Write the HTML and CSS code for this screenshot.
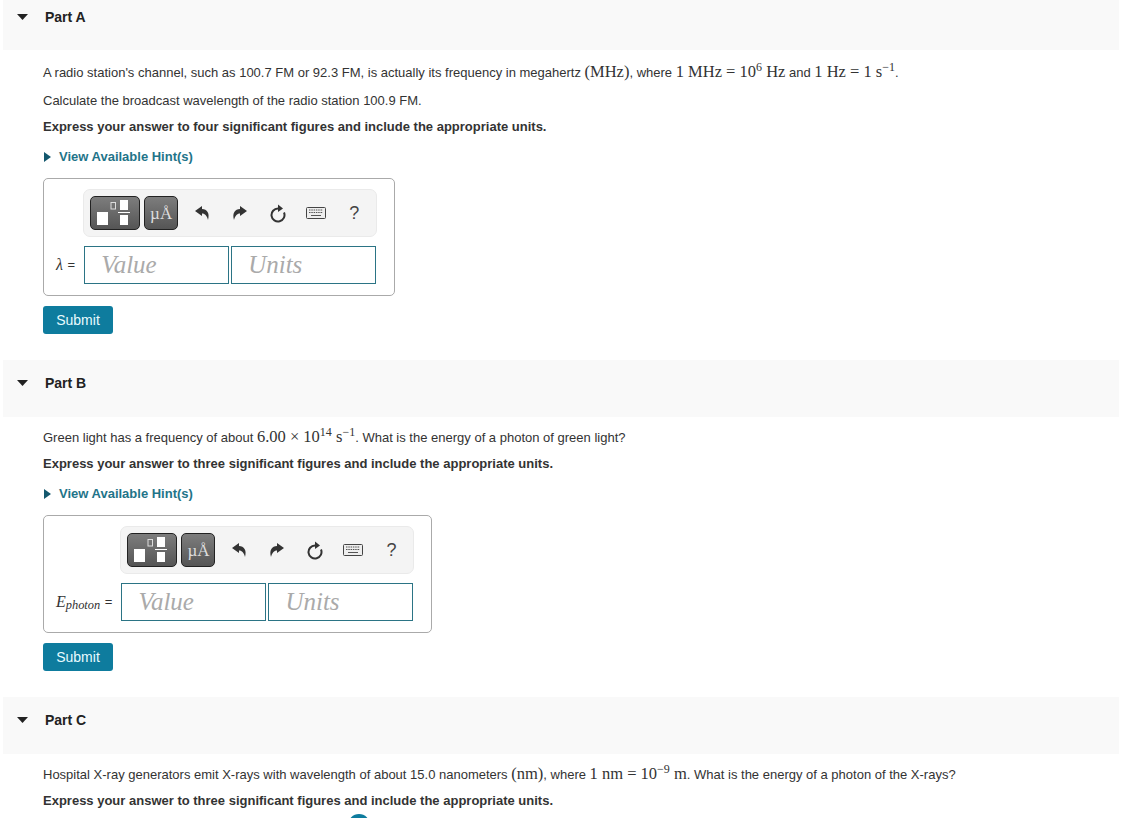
FILE: index.html
```html
<!DOCTYPE html>
<html>

<head>
    <title>Part A, B, C</title>
    <link rel="stylesheet" href="styles.css">
</head>

<body>
    <div class="container">

        <section class="part">
            <header class="part-header part-header-first">
                <svg class="caret" width="11" height="6" viewBox="0 0 11 6"><path d="M0 0H11L5.5 6Z" /></svg>
                <span>Part A</span>
            </header>
            <div class="part-body">
                <p class="text intro">A radio station's channel, such as 100.7 FM or 92.3 FM, is actually its frequency in megahertz <span class="math">(MHz)</span>, where <span class="math">1 MHz = 10<sup>6</sup> Hz</span> and <span class="math">1 Hz = 1 s<sup>&minus;1</sup></span>.</p>
                <p class="text">Calculate the broadcast wavelength of the radio station 100.9 FM.</p>
                <p class="text"><strong>Express your answer to four significant figures and include the appropriate units.</strong></p>
                <a class="hint">
                    <svg width="7" height="10" viewBox="0 0 7 10"><path d="M0 0L7 5L0 10Z" /></svg>
                    View Available Hint(s)
                </a>
                <div class="answer-box">
                    <div class="toolbar">
                        <div class="tool-btn tool-btn-wide">
                            <svg width="50" height="34" viewBox="0 0 50 34"><rect x="7" y="16" width="11" height="13" fill="#fff" /><rect x="21" y="6.5" width="4.5" height="6.5" fill="none" stroke="#ddd" /><rect x="30" y="4" width="8" height="10" fill="#fff" /><rect x="28" y="16" width="12" height="1" fill="#fff" /><rect x="30" y="19" width="8" height="10" fill="#fff" /></svg>
                        </div>
                        <div class="tool-btn">&micro;&Aring;</div>
                        <div class="tool-icons">
                            <svg width="16" height="16" viewBox="0 0 16 16"><path d="M1 6L8 1V4C13 4 16 8 14 15C13 11 11 8.500 8 8.500V11Z" /></svg>
                            <svg width="16" height="16" viewBox="0 0 16 16"><path d="M15 6L8 1V4C3 4 0 8 2 15C3 11 5 8.500 8 8.500V11Z" /></svg>
                            <svg width="18" height="20" viewBox="0 0 18 20"><path d="M9 5.500A6.500 6.500 0 1 0 15 9.500" fill="none" stroke="#333" stroke-width="2" /><path d="M9 1.500L14 5.500L9 9Z" /></svg>
                            <svg width="20" height="12" viewBox="0 0 20 12"><rect x="0.500" y="0.500" width="19" height="11" rx="1" fill="#eee" stroke="#444" /><path d="M3 3H17M3 5.500H17" stroke="#555" stroke-dasharray="1.500 .8" /><path d="M5 8.500H15" stroke="#555" /></svg>
                            <span class="tool-help">?</span>
                        </div>
                    </div>
                    <div class="answer-label"><i class="math">&lambda;</i> =</div>
                    <div class="fields">
                        <div class="field">Value</div>
                        <div class="field">Units</div>
                    </div>
                </div>
                <button class="submit">Submit</button>
            </div>
        </section>

        <section class="part">
            <header class="part-header">
                <svg class="caret" width="11" height="6" viewBox="0 0 11 6"><path d="M0 0H11L5.5 6Z" /></svg>
                <span>Part B</span>
            </header>
            <div class="part-body">
                <p class="text">Green light has a frequency of about <span class="math">6.00 &times; 10<sup>14</sup> s<sup>&minus;1</sup></span>. What is the energy of a photon of green light?</p>
                <p class="text"><strong>Express your answer to three significant figures and include the appropriate units.</strong></p>
                <a class="hint">
                    <svg width="7" height="10" viewBox="0 0 7 10"><path d="M0 0L7 5L0 10Z" /></svg>
                    View Available Hint(s)
                </a>
                <div class="answer-box">
                    <div class="toolbar">
                        <div class="tool-btn tool-btn-wide">
                            <svg width="50" height="34" viewBox="0 0 50 34"><rect x="7" y="16" width="11" height="13" fill="#fff" /><rect x="21" y="6.5" width="4.5" height="6.5" fill="none" stroke="#ddd" /><rect x="30" y="4" width="8" height="10" fill="#fff" /><rect x="28" y="16" width="12" height="1" fill="#fff" /><rect x="30" y="19" width="8" height="10" fill="#fff" /></svg>
                        </div>
                        <div class="tool-btn">&micro;&Aring;</div>
                        <div class="tool-icons">
                            <svg width="16" height="16" viewBox="0 0 16 16"><path d="M1 6L8 1V4C13 4 16 8 14 15C13 11 11 8.500 8 8.500V11Z" /></svg>
                            <svg width="16" height="16" viewBox="0 0 16 16"><path d="M15 6L8 1V4C3 4 0 8 2 15C3 11 5 8.500 8 8.500V11Z" /></svg>
                            <svg width="18" height="20" viewBox="0 0 18 20"><path d="M9 5.500A6.500 6.500 0 1 0 15 9.500" fill="none" stroke="#333" stroke-width="2" /><path d="M9 1.500L14 5.500L9 9Z" /></svg>
                            <svg width="20" height="12" viewBox="0 0 20 12"><rect x="0.500" y="0.500" width="19" height="11" rx="1" fill="#eee" stroke="#444" /><path d="M3 3H17M3 5.500H17" stroke="#555" stroke-dasharray="1.500 .8" /><path d="M5 8.500H15" stroke="#555" /></svg>
                            <span class="tool-help">?</span>
                        </div>
                    </div>
                    <div class="answer-label"><i class="math">E<sub>photon</sub></i> =</div>
                    <div class="fields">
                        <div class="field">Value</div>
                        <div class="field">Units</div>
                    </div>
                </div>
                <button class="submit">Submit</button>
            </div>
        </section>

        <section class="part">
            <header class="part-header">
                <svg class="caret" width="11" height="6" viewBox="0 0 11 6"><path d="M0 0H11L5.5 6Z" /></svg>
                <span>Part C</span>
            </header>
            <div class="part-body">
                <p class="text">Hospital X-ray generators emit X-rays with wavelength of about 15.0 nanometers <span class="math">(nm)</span>, where <span class="math">1 nm = 10<sup>&minus;9</sup> m</span>. What is the energy of a photon of the X-rays?</p>
                <p class="text"><strong>Express your answer to three significant figures and include the appropriate units.</strong></p>
            </div>
        </section>

    </div>

    <div class="float-badge"></div>
</body>

</html>
```

FILE: styles.css
```css
html,
body {
    height: 818px;
    overflow: hidden;
}

body {
    font-family: "Liberation Sans", Arial, sans-serif;
    font-size: 13px;
    line-height: 20px;
    color: #333;
    margin: 0;
    padding: 0;
    background-color: #fff;
    position: relative;
}

.container {
    margin: 0 6px 0 3px;
}

.part-header {
    display: flex;
    align-items: flex-start;
    gap: 17px;
    height: 44px;
    padding: 13px 0 0 14px;
    background-color: #f9f9f9;
    color: #222;
    font-size: 14px;
    font-weight: bold;
}

.part-header-first {
    height: 43px;
    padding-top: 7px;
}

.caret {
    margin-top: 7px;
    fill: #222;
}

.part-body {
    padding: 11px 0 26px 40px;
}

.text {
    margin: 0 0 6px;
}

.intro {
    margin: 2px 0 8px;
}

.math {
    font-family: "Liberation Serif", "Times New Roman", serif;
    font-size: 16.5px;
    line-height: 1;
    color: #333;
}

.math sup {
    font-size: 12px;
    line-height: 0;
}

.math sub {
    font-size: 12px;
    line-height: 0;
}

.hint {
    display: flex;
    align-items: center;
    gap: 8px;
    margin: 10px 0 11px 1px;
    color: #1f7489;
    font-weight: bold;
}

.hint svg {
    fill: #14586e;
}

.answer-box {
    display: grid;
    grid-template-columns: auto auto;
    column-gap: 9px;
    row-gap: 9px;
    width: fit-content;
    padding: 10px 18px 11px 12px;
    border: 1px solid #aaa;
    border-radius: 5px;
}

.toolbar {
    grid-column: 2;
    display: flex;
    align-items: center;
    gap: 4px;
    height: 46px;
    width: 286px;
    margin: 0 -1px;
    padding-left: 6px;
    background-color: #f4f4f4;
    border: 1px solid #eaeaea;
    border-radius: 7px;
}

.tool-btn {
    width: 32px;
    height: 32px;
    line-height: 34px;
    text-align: center;
    font-family: "Liberation Serif", serif;
    font-size: 17px;
    color: #ddd;
    background: linear-gradient(#7d7d7d, #555);
    border: 1px solid #222;
    border-radius: 5px;
}

.tool-btn-wide {
    width: 48px;
}

.tool-btn-wide svg {
    display: block;
    margin: -1px;
}

.tool-icons {
    display: grid;
    grid-template-columns: repeat(5, 38px);
    justify-items: center;
    align-items: center;
    margin-left: 1px;
    fill: #333;
}

.tool-help {
    font-size: 18px;
    color: #444;
}

.answer-label {
    display: flex;
    align-items: center;
    gap: 1px;
    font-size: 13px;
    white-space: pre;
}

.answer-label .math {
    font-size: 16px;
}

.answer-label sub {
    font-size: 12.4px;
    vertical-align: -2px;
}

.fields {
    display: flex;
    gap: 2px;
}

.field {
    width: 127px;
    height: 36px;
    padding-left: 16px;
    border: 1px solid #2b7485;
    font-family: "Liberation Serif", serif;
    font-style: italic;
    font-size: 25px;
    line-height: 36px;
    color: #aaa;
}

.submit {
    display: block;
    width: 70px;
    height: 28px;
    margin-top: 10px;
    padding: 0;
    border: 0;
    border-radius: 3px;
    background-color: #0e7c9e;
    color: #e8fbff;
    font-family: "Liberation Sans", Arial, sans-serif;
    font-size: 14px;
}

.float-badge {
    position: absolute;
    left: 348px;
    top: 814px;
    width: 22px;
    height: 22px;
    border-radius: 50%;
    background-color: #0e7c9e;
}
```
